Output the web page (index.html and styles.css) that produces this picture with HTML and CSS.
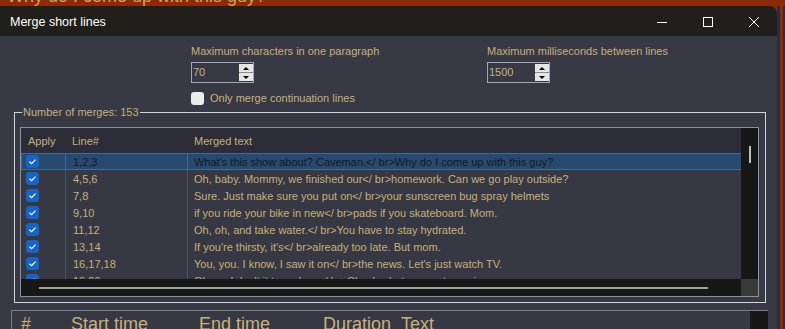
FILE: index.html
```html
<!DOCTYPE html>
<html>
<head>
<meta charset="utf-8">
<link rel="stylesheet" href="styles.css">
</head>
<body>
<div class="bgtext"><span>Why do I come up with this guy?</span></div>
<div class="desk">
  <div class="window">
    <div class="titlebar">
      <div class="title">Merge short lines</div>
      <div class="winctl">
        <svg class="ico" width="12" height="12" viewBox="0 0 12 12"><path d="M1 6.5h10" stroke="#fff" stroke-width="1"/></svg>
        <svg class="ico" width="12" height="12" viewBox="0 0 12 12"><rect x="1.5" y="1.5" width="9" height="9" fill="none" stroke="#fff" stroke-width="1"/></svg>
        <svg class="ico" width="12" height="12" viewBox="0 0 12 12"><path d="M1 1L11 11M11 1L1 11" stroke="#fff" stroke-width="1"/></svg>
      </div>
    </div>
    <div class="content">
      <div class="top">
        <div class="col col1">
          <div class="lbl">Maximum characters in one paragraph</div>
          <div class="num"><span class="val">70</span><span class="spin"><span class="sb"><i class="up"></i></span><span class="sb"><i class="dn"></i></span></span></div>
          <div class="chkrow"><span class="chk"></span><span class="lbl">Only merge continuation lines</span></div>
        </div>
        <div class="col">
          <div class="lbl">Maximum milliseconds between lines</div>
          <div class="num"><span class="val">1500</span><span class="spin"><span class="sb"><i class="up"></i></span><span class="sb"><i class="dn"></i></span></span></div>
        </div>
      </div>
      <div class="group">
        <span class="legend">Number of merges: 153</span>
        <div class="list">
          <div class="view">
            <div class="hdr">
              <div class="c1">Apply</div><div class="c2">Line#</div><div class="c3">Merged text</div>
            </div>
            <div class="row sel"><div class="c1"><span class="cb"><svg width="13" height="13" viewBox="0 0 13 13"><path d="M3.5 6.8L5.6 8.7L9.5 4.6" fill="none" stroke="#fff" stroke-width="1.2"/></svg></span></div><div class="c2">1,2,3</div><div class="c3">What's this show about? Caveman.&lt;/ br&gt;Why do I come up with this guy?</div></div>
            <div class="row"><div class="c1"><span class="cb"><svg width="13" height="13" viewBox="0 0 13 13"><path d="M3.5 6.8L5.6 8.7L9.5 4.6" fill="none" stroke="#fff" stroke-width="1.2"/></svg></span></div><div class="c2">4,5,6</div><div class="c3">Oh, baby. Mommy, we finished our&lt;/ br&gt;homework. Can we go play outside?</div></div>
            <div class="row"><div class="c1"><span class="cb"><svg width="13" height="13" viewBox="0 0 13 13"><path d="M3.5 6.8L5.6 8.7L9.5 4.6" fill="none" stroke="#fff" stroke-width="1.2"/></svg></span></div><div class="c2">7,8</div><div class="c3">Sure. Just make sure you put on&lt;/ br&gt;your sunscreen bug spray helmets</div></div>
            <div class="row"><div class="c1"><span class="cb"><svg width="13" height="13" viewBox="0 0 13 13"><path d="M3.5 6.8L5.6 8.7L9.5 4.6" fill="none" stroke="#fff" stroke-width="1.2"/></svg></span></div><div class="c2">9,10</div><div class="c3">if you ride your bike in new&lt;/ br&gt;pads if you skateboard. Mom.</div></div>
            <div class="row"><div class="c1"><span class="cb"><svg width="13" height="13" viewBox="0 0 13 13"><path d="M3.5 6.8L5.6 8.7L9.5 4.6" fill="none" stroke="#fff" stroke-width="1.2"/></svg></span></div><div class="c2">11,12</div><div class="c3">Oh, oh, and take water.&lt;/ br&gt;You have to stay hydrated.</div></div>
            <div class="row"><div class="c1"><span class="cb"><svg width="13" height="13" viewBox="0 0 13 13"><path d="M3.5 6.8L5.6 8.7L9.5 4.6" fill="none" stroke="#fff" stroke-width="1.2"/></svg></span></div><div class="c2">13,14</div><div class="c3">If you're thirsty, it's&lt;/ br&gt;already too late. But mom.</div></div>
            <div class="row"><div class="c1"><span class="cb"><svg width="13" height="13" viewBox="0 0 13 13"><path d="M3.5 6.8L5.6 8.7L9.5 4.6" fill="none" stroke="#fff" stroke-width="1.2"/></svg></span></div><div class="c2">16,17,18</div><div class="c3">You, you. I know, I saw it on&lt;/ br&gt;the news. Let's just watch TV.</div></div>
            <div class="row"><div class="c1"><span class="cb"><svg width="13" height="13" viewBox="0 0 13 13"><path d="M3.5 6.8L5.6 8.7L9.5 4.6" fill="none" stroke="#fff" stroke-width="1.2"/></svg></span></div><div class="c2">19,20</div><div class="c3">Oh, and don't it too, okay.&lt;/ br&gt;Check what comes to me in</div></div>
          </div>
          <div class="vscroll"><span class="vthumb"></span></div>
          <div class="hscroll"><span class="hthumb"></span></div>
          <div class="corner"></div>
        </div>
      </div>
      <div class="panel">
        <div class="phdr">
          <span class="p1">#</span><span class="p2">Start time</span><span class="p3">End time</span><span class="p4">Duration</span><span class="p5">Text</span>
        </div>
        <div class="pscroll"></div>
      </div>
    </div>
  </div>
  <div class="edge"></div>
</div>
</body>
</html>
```
FILE: styles.css
```css
html, body {
  margin: 0;
  padding: 0;
}
body {
  width: 785px;
  height: 329px;
  overflow: hidden;
  background: #8e2a0c;
  font-family: "Liberation Sans", Arial, sans-serif;
  font-size: 11px;
  color: #c8b07a;
}
.bgtext {
  height: 6px;
  overflow: hidden;
  padding-left: 7px;
}
.bgtext span {
  display: block;
  font-size: 18px;
  line-height: 20px;
  margin-top: -14px;
  color: #cfa35a;
}
.desk {
  display: flex;
  height: 323px;
}
.window {
  width: 777px;
  background: #373945;
  border-top-right-radius: 8px;
  overflow: hidden;
  flex: none;
}
.edge {
  flex: 1;
  background: linear-gradient(90deg, #2a2c36 0 3px, #8e2a0c 3px 6px, #2a2c36 6px);
}
.titlebar {
  height: 30px;
  background: #201f1c;
  display: flex;
  align-items: center;
  justify-content: space-between;
}
.title {
  color: #ffffff;
  font-size: 12.5px;
  padding-left: 10px;
  padding-top: 1px;
}
.winctl {
  display: flex;
  gap: 34px;
  padding-right: 17px;
  padding-top: 1px;
}
.ico {
  display: block;
}
.content {
  display: flex;
  flex-direction: column;
}
.top {
  display: flex;
  padding-left: 191px;
  padding-top: 9px;
}
.col1 {
  width: 296px;
}
.lbl {
  line-height: 13px;
  height: 13px;
  white-space: nowrap;
}
.num {
  margin-top: 4px;
  width: 61px;
  height: 19px;
  border: 1px solid #a6a7b0;
  display: flex;
  align-items: center;
  justify-content: space-between;
}
.val {
  padding-left: 1px;
  line-height: 19px;
}
.spin {
  width: 14px;
  height: 17px;
  display: flex;
  flex-direction: column;
  gap: 1px;
  background: #8a8a8a;
}
.sb {
  flex: 1;
  background: #e6e6e6;
  display: flex;
  align-items: center;
  justify-content: center;
}
.sb i {
  display: block;
  width: 0;
  height: 0;
  border-left: 3px solid transparent;
  border-right: 3px solid transparent;
}
.sb .up {
  border-bottom: 3px solid #000;
}
.sb .dn {
  border-top: 3px solid #000;
}
.chkrow {
  display: flex;
  align-items: center;
  gap: 6px;
  margin-top: 9px;
  height: 13px;
}
.chk {
  width: 13px;
  height: 13px;
  border-radius: 3px;
  background: #ececec;
}
.group {
  position: relative;
  margin-top: 7px;
  margin-left: 14px;
  border: 1px solid #d4d4dc;
  padding: 14px 6px 5px 5px;
  box-sizing: border-box;
  width: 752px;
}
.legend {
  position: absolute;
  top: -7px;
  left: 7px;
  padding: 0 1px;
  line-height: 13px;
  background: #373945;
}
.list {
  width: 739px;
  border: 1px solid #8e909b;
  box-sizing: border-box;
  display: grid;
  grid-template-columns: 720px 17px;
  grid-template-rows: 151px 17px;
  background: #363843;
}
.view {
  overflow: hidden;
}
.hdr {
  height: 25px;
  display: flex;
  align-items: center;
  background: #2c2d38;
}
.hdr .c1 {
  width: 45px;
  padding-left: 7px;
  box-sizing: border-box;
}
.hdr .c2 {
  width: 122px;
  padding-left: 6px;
  box-sizing: border-box;
}
.hdr .c3 {
  padding-left: 6px;
}
.row {
  height: 17px;
  display: flex;
  align-items: stretch;
  white-space: nowrap;
}
.row > div {
  display: flex;
  align-items: center;
  box-sizing: border-box;
}
.row .c1 {
  width: 45px;
  padding-left: 5px;
  border-right: 1px solid #4a5466;
}
.row .c2 {
  width: 122px;
  padding-left: 7px;
  border-right: 1px solid #4a5466;
}
.row .c3 {
  padding-left: 6px;
}
.row.sel {
  background: #284a6e;
  box-shadow: inset 0 1px 0 #3c6c9c, inset 0 -1px 0 #3c6c9c, inset 1px 0 0 #3c6c9c;
  color: #16182a;
}
.row.sel .c1, .row.sel .c2 {
  border-right-color: #3c6c9c;
}
.cb {
  width: 13px;
  height: 13px;
  border-radius: 3px;
  background: #1565c8;
  display: block;
}
.cb svg {
  display: block;
}
.vscroll {
  background: #171717;
  position: relative;
}
.vthumb {
  position: absolute;
  left: 8px;
  top: 18px;
  width: 2px;
  height: 17px;
  background: #bdbdbd;
}
.hscroll {
  background: #171717;
  position: relative;
}
.hthumb {
  position: absolute;
  left: 18px;
  top: 8px;
  width: 669px;
  height: 2px;
  background: #a4a4a4;
}
.corner {
  background: #3a3a3a;
}
.panel {
  margin-top: 7px;
  margin-left: 11px;
  width: 757px;
  height: 40px;
  border: 1px solid #7c7e88;
  border-right: none;
  box-sizing: border-box;
  display: flex;
  background: #363843;
}
.phdr {
  flex: 1;
  display: flex;
  font-size: 18px;
  line-height: 20px;
  padding-top: 3px;
  white-space: nowrap;
}
.phdr span {
  display: block;
}
.p1 { width: 59px; padding-left: 9px; box-sizing: border-box; }
.p2 { width: 128px; }
.p3 { width: 124px; }
.p4 { width: 78px; }
.pscroll {
  width: 18px;
  background: #171717;
}
```
